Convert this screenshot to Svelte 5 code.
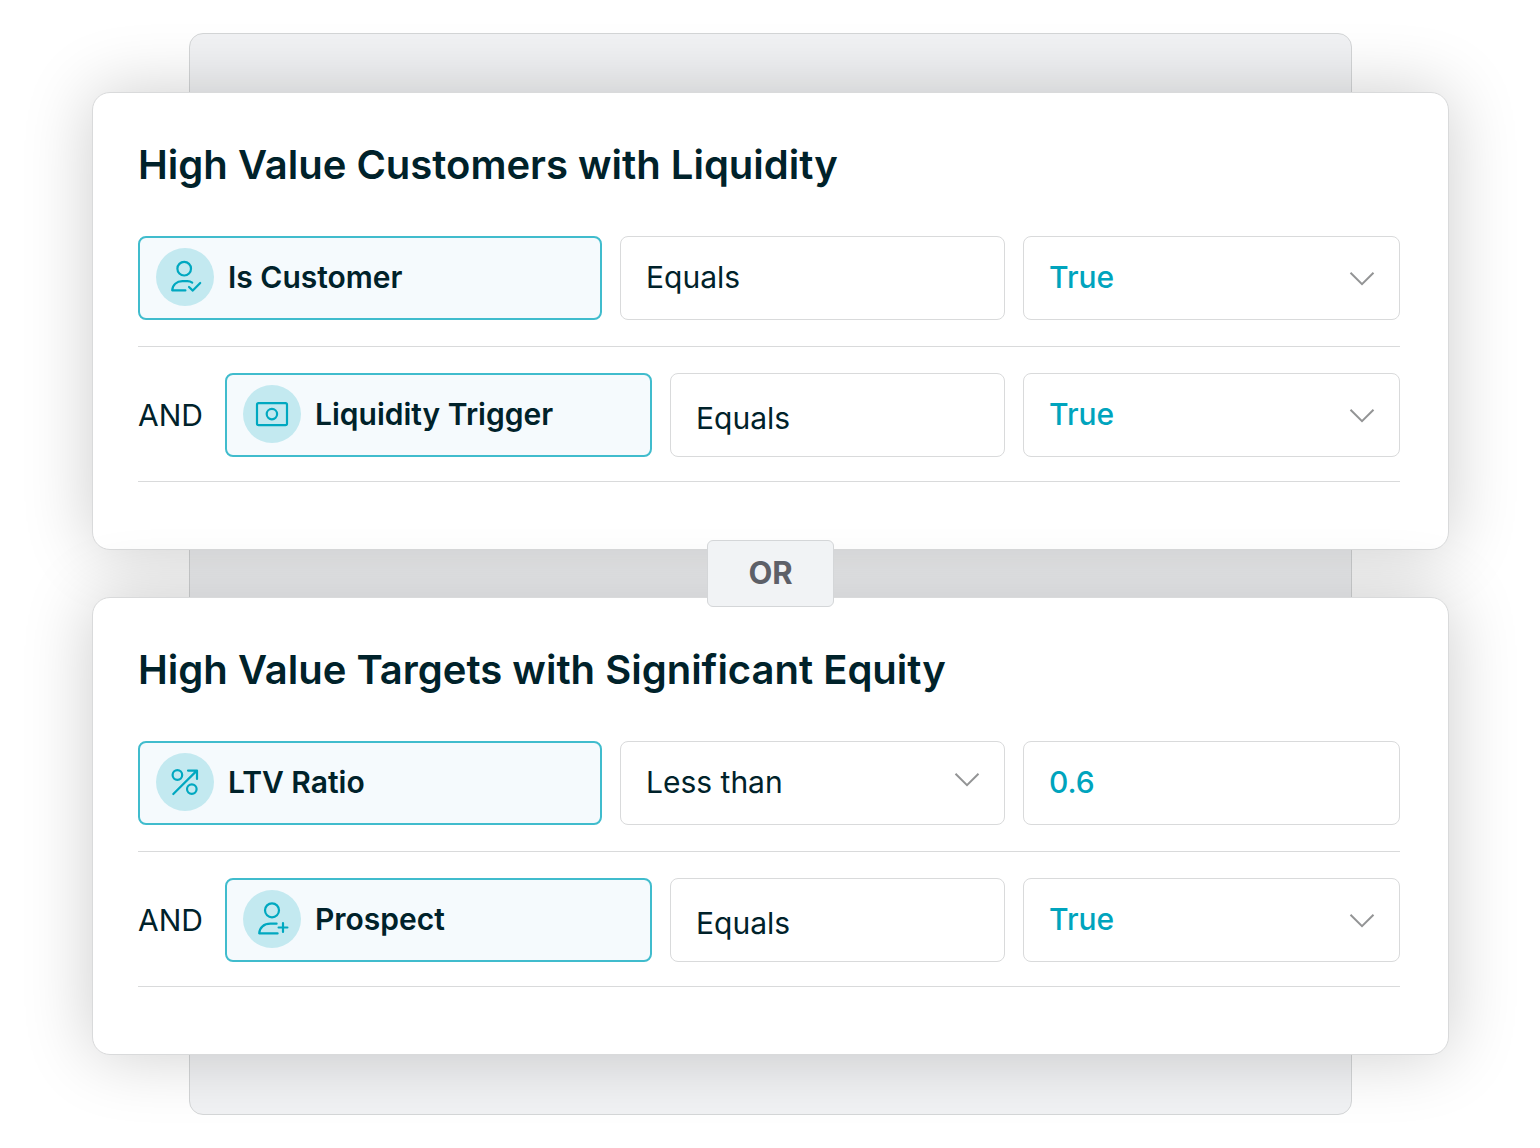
<script lang="ts">
  type Icon = "customer" | "cash" | "ratio" | "prospect";

  type Condition = {
    icon: Icon;
    field: string;
    operator: string;
    operatorOptions?: string[];
    value: string;
    valueOptions?: string[];
  };

  type Segment = {
    title: string;
    conditions: Condition[];
  };

  let segments: Segment[] = $state([
    {
      title: "High Value Customers with Liquidity",
      conditions: [
        {
          icon: "customer",
          field: "Is Customer",
          operator: "Equals",
          value: "True",
          valueOptions: ["True", "False"],
        },
        {
          icon: "cash",
          field: "Liquidity Trigger",
          operator: "Equals",
          value: "True",
          valueOptions: ["True", "False"],
        },
      ],
    },
    {
      title: "High Value Targets with Significant Equity",
      conditions: [
        {
          icon: "ratio",
          field: "LTV Ratio",
          operator: "Less than",
          operatorOptions: ["Less than", "Greater than", "Equals"],
          value: "0.6",
        },
        {
          icon: "prospect",
          field: "Prospect",
          operator: "Equals",
          value: "True",
          valueOptions: ["True", "False"],
        },
      ],
    },
  ]);
</script>

{#snippet chevron()}
  <svg class="chevron" viewBox="0 0 26 16" aria-hidden="true">
    <path d="M1.5 1.8 13 13.2 24.5 1.8" />
  </svg>
{/snippet}

{#snippet fieldIcon(icon: Icon)}
  <svg class="field-icon" viewBox="0 0 58 58" aria-hidden="true">
    {#if icon === "customer"}
      <circle cx="28.2" cy="20.7" r="6.8" />
      <path d="M36.2 34.6C34.8 33.6 33.2 33.2 31.4 33.2H26.4C20.6 33.2 16.5 36.8 16.2 42.4H29.4" />
      <path d="M33 39 36.8 42.6 44.2 35" />
    {:else if icon === "cash"}
      <rect x="14" y="18.2" width="30" height="22" rx="1.6" />
      <circle cx="28.9" cy="29.1" r="5.2" />
    {:else if icon === "ratio"}
      <circle cx="21.4" cy="22" r="4.8" />
      <circle cx="35.8" cy="36.1" r="4.8" />
      <path d="M17.3 41 40.8 17.6M32 17.6H41V26" />
    {:else}
      <circle cx="29" cy="20.3" r="7" />
      <path d="M33.6 33.7H27.4C21 33.7 16.5 37.4 16.2 43.4H34.6" />
      <path d="M40 33.1V42M35.6 37.5H44.4" />
    {/if}
  </svg>
{/snippet}

<main class="page">
  <div class="backdrop"></div>

  <div class="stack">
    {#each segments as segment, s}
      {#if s > 0}
        <div class="joiner"><span>OR</span></div>
      {/if}

      <section class="card">
        <h2>{segment.title}</h2>

        {#each segment.conditions as condition, i}
          <div class="row" class:nested={i > 0}>
            {#if i > 0}
              <span class="and">AND</span>
            {/if}

            <button type="button" class="field">
              {@render fieldIcon(condition.icon)}
              {condition.field}
            </button>

            <div class="control operator">
              {#if condition.operatorOptions}
                <select aria-label="{condition.field} operator" bind:value={condition.operator}>
                  {#each condition.operatorOptions as option}
                    <option>{option}</option>
                  {/each}
                </select>
                {@render chevron()}
              {:else}
                <input
                  type="text"
                  aria-label="{condition.field} operator"
                  value={condition.operator}
                  readonly
                />
              {/if}
            </div>

            <div class="control value">
              {#if condition.valueOptions}
                <select aria-label="{condition.field} value" bind:value={condition.value}>
                  {#each condition.valueOptions as option}
                    <option>{option}</option>
                  {/each}
                </select>
                {@render chevron()}
              {:else}
                <input
                  type="text"
                  inputmode="decimal"
                  aria-label="{condition.field} value"
                  bind:value={condition.value}
                />
              {/if}
            </div>
          </div>
        {/each}
      </section>
    {/each}
  </div>
</main>

<style>
  :global(body) {
    background: #fff;
  }

  .page {
    color: #00222a;
    display: grid;
    font-family: Inter, "Liberation Sans", sans-serif;
    font-size: 30px;
    line-height: 36px;
    padding: 33px 91px 33px 92px;
  }

  .backdrop,
  .stack {
    grid-area: 1 / 1;
    min-width: 0;
  }

  .backdrop {
    background: #f1f2f4;
    border: 1px solid #d4d6d7;
    border-radius: 14px;
    margin: 0 97px;
  }

  .stack {
    margin: 59px 0 60px;
  }

  .card {
    background: #fff;
    border: 1px solid #d9dadb;
    border-radius: 18px;
    box-shadow: 0 0 70px rgba(0, 0, 0, 0.2);
    padding: 48px 48px 67px 45px;
  }

  h2 {
    font-size: 40px;
    font-weight: 600;
    line-height: 48px;
    margin: 0 0 47px;
  }

  .joiner {
    display: grid;
    height: 47px;
    place-items: center;
    position: relative;
    z-index: 1;
  }

  .joiner span {
    background: #f1f3f5;
    border: 1px solid #d4d6d8;
    border-radius: 6px;
    box-sizing: border-box;
    color: #5d6068;
    font-size: 31px;
    font-weight: 700;
    height: 67px;
    line-height: 64px;
    margin: -10px 0;
    padding: 0 40px;
  }

  .row {
    border-bottom: 1px solid #d9dadb;
    display: grid;
    gap: 18px;
    grid-template-columns: 464fr 385fr 377fr;
    padding-bottom: 26px;
  }

  .row.nested {
    grid-template-columns: 69px 427fr 335fr 377fr;
    padding: 26px 0 24px;
  }

  .and {
    align-self: center;
  }

  .field {
    align-items: center;
    background: #f5fafd;
    border: 2px solid #40bccd;
    border-radius: 8px;
    color: inherit;
    cursor: pointer;
    display: flex;
    font: inherit;
    font-weight: 600;
    gap: 14px;
    height: 84px;
    min-width: 0;
    padding: 0 16px 2px;
    text-align: left;
  }

  .field-icon {
    background: #c3e9f0;
    border-radius: 50%;
    fill: none;
    flex: none;
    height: 58px;
    stroke: #00a8c0;
    stroke-linecap: round;
    stroke-linejoin: round;
    stroke-width: 2.2;
    width: 58px;
  }

  .control {
    align-items: center;
    border: 1px solid #d9dadb;
    border-radius: 8px;
    box-sizing: border-box;
    display: grid;
    height: 84px;
    min-width: 0;
  }

  .nested .operator {
    padding-top: 8px;
  }

  .control select,
  .control input,
  .chevron {
    grid-area: 1 / 1;
  }

  select,
  input {
    appearance: none;
    background: none;
    border: 0;
    box-sizing: border-box;
    color: inherit;
    font: inherit;
    height: 100%;
    min-width: 0;
    padding: 0 25px 2px;
    width: 100%;
  }

  .value {
    color: #00a4bd;
    font-weight: 500;
  }

  .chevron {
    fill: none;
    justify-self: end;
    margin: 2px 24px 0 0;
    pointer-events: none;
    stroke: #939495;
    stroke-width: 2;
    width: 26px;
  }

  .operator .chevron {
    margin-bottom: 8px;
  }
</style>
